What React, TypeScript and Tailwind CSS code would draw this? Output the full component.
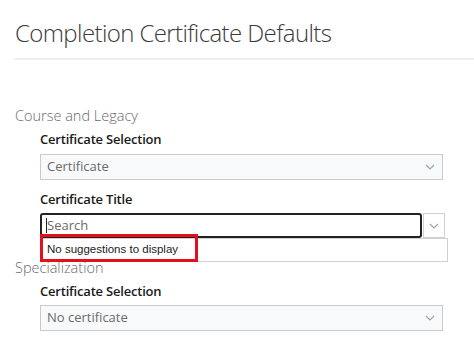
import React from "react";

const Chevron = () => (
  <svg width="10" height="6" viewBox="0 0 10 6" fill="none">
    <path d="M1 1l4 4 4-4" stroke="#a0a4a8" strokeWidth="1.2" />
  </svg>
);

function Select({ value }: { value: string }) {
  return (
    <div className="ml-[40px] w-[403px] h-[26px] border border-[#c8cacc] bg-[#f8f9fa] flex items-center justify-between pl-[6px] pr-[7px]">
      <span className="text-[13px] text-[#6a6a6a]">{value}</span>
      <Chevron />
    </div>
  );
}

const label = "pl-[40px] text-[13px] font-semibold text-[#1a1a1a] leading-[19px] tracking-[-0.2px]";
const section = "pl-[15px] text-[14.5px] font-light text-[#6b6b6b] leading-[20px]";

export default function App() {
  return (
    <div className="w-[474px] h-[349px] bg-white overflow-hidden relative" style={{ fontFamily: '"Open Sans", "Noto Sans", sans-serif' }}>
      <div className="pl-[15px] pt-[17px]">
        <h1 className="text-[24px] font-light text-[#3a3a3a] leading-[32px] tracking-[-0.6px]">Completion Certificate Defaults</h1>
      </div>
      <div className="ml-[14px] mt-[9px] h-[2px] bg-[#efefef]" />
      <div className={`${section} mt-[46px]`}>Course and Legacy</div>
      <div className={`${label} mt-[4px]`}>Certificate Selection</div>
      <div className="mt-[5px]"><Select value="Certificate" /></div>
      <div className={`${label} mt-[10px]`}>Certificate Title</div>
      <div className="relative mt-[4px] h-[49px]">
        <div className="ml-[40px] flex">
          <div className="w-[382px] h-[25px] border-2 border-[#222] rounded-[3px] flex items-center pl-[4px]">
            <span className="w-[1px] h-[15px] bg-[#222]" />
            <span className="text-[13px] text-[#6a6a6a] leading-none">Search</span>
          </div>
          <div className="ml-[1px] w-[22px] h-[25px] border border-[#cfd1d3] flex items-center justify-center">
            <Chevron />
          </div>
        </div>
        <div className="ml-[40px] w-[408px] h-[24px] border border-[#d0d0d0] bg-white flex items-center pl-[6px]">
          <span className="text-[11.5px] text-[#222]" style={{ fontFamily: '"Liberation Sans", Arial, sans-serif' }}>No suggestions to display</span>
        </div>
        <div className="absolute left-[40px] top-[21px] w-[158px] h-[28px] border-[3px] border-[#e3101c]" />
      </div>
      <div className={`${section} -mt-[4px]`}>Specialization</div>
      <div className={`${label} mt-[4px]`}>Certificate Selection</div>
      <div className="mt-[4px]"><Select value="No certificate" /></div>
    </div>
  );
}
